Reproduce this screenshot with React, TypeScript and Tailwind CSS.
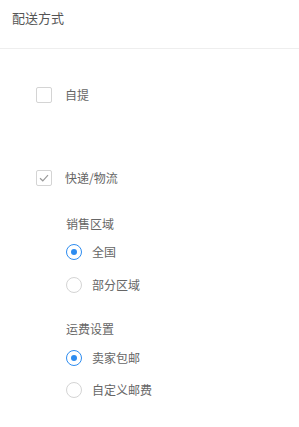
import React from 'react';

function Checkbox({ checked }: { checked?: boolean }) {
  return (
    <span className="flex h-4 w-4 shrink-0 items-center justify-center rounded-[2px] border border-[#d4d4d4] bg-white">
      {checked && (
        <svg width="10" height="8" viewBox="0 0 10 8" fill="none">
          <path d="M1 4.2 3.8 6.8 9 1.2" stroke="#9a9a9a" strokeWidth="1.2" />
        </svg>
      )}
    </span>
  );
}

function Radio({ checked }: { checked?: boolean }) {
  return (
    <span
      className={`flex h-4 w-4 shrink-0 items-center justify-center rounded-full border bg-white ${
        checked ? 'border-[#2d8cf0]' : 'border-[#d4d4d4]'
      }`}
    >
      {checked && <span className="h-[6px] w-[6px] rounded-full bg-[#2d8cf0]" />}
    </span>
  );
}

export default function App() {
  return (
    <div
      className="h-[427px] w-[299px] bg-white text-[12px] text-[#666]"
      style={{ fontFamily: '"Noto Sans CJK SC", "Noto Sans", sans-serif' }}
    >
      <div className="h-[49px] border-b border-[#eee] pl-3 pt-[10px] text-[13px] leading-[16px] text-[#555]">
        配送方式
      </div>

      <div className="flex flex-col pl-9 pt-[38px]">
        <label className="flex h-4 items-center gap-[13px] leading-4">
          <Checkbox />
          <span>自提</span>
        </label>

        <label className="mt-[67px] flex h-4 items-center gap-[13px] leading-4">
          <Checkbox checked />
          <span>快递/物流</span>
        </label>

        <div className="mt-[30px] flex flex-col pl-[30px]">
          <div className="leading-4">销售区域</div>
          <label className="mt-3 flex h-4 items-center gap-[10px] leading-4">
            <Radio checked />
            <span>全国</span>
          </label>
          <label className="mt-[17px] flex h-4 items-center gap-[10px] leading-4">
            <Radio />
            <span>部分区域</span>
          </label>

          <div className="mt-[28px] leading-4">运费设置</div>
          <label className="mt-[13px] flex h-4 items-center gap-[10px] leading-4">
            <Radio checked />
            <span>卖家包邮</span>
          </label>
          <label className="mt-4 flex h-4 items-center gap-[10px] leading-4">
            <Radio />
            <span>自定义邮费</span>
          </label>
        </div>
      </div>
    </div>
  );
}
